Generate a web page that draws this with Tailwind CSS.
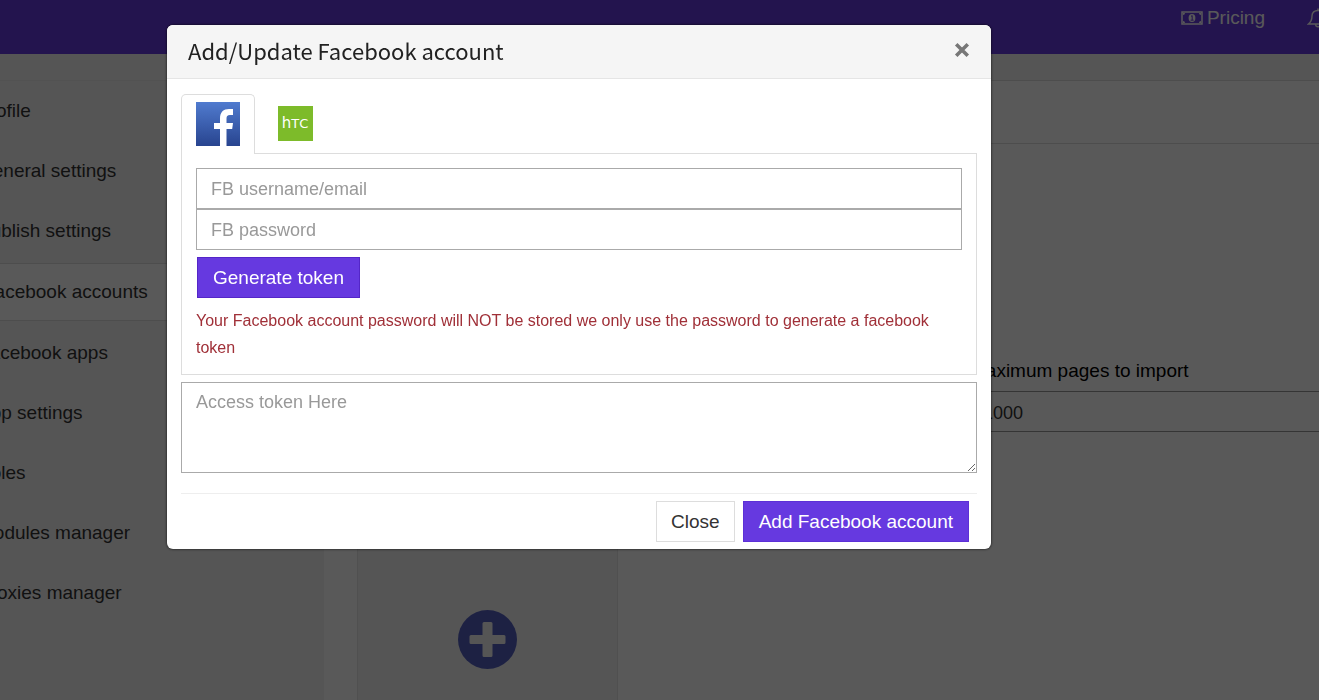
<!DOCTYPE html>
<html lang="en">
<head>
  <meta charset="UTF-8">
  <meta name="viewport" content="width=device-width, initial-scale=1.0">
  <title>Facebook accounts</title>
  <script src="https://cdn.jsdelivr.net/npm/@tailwindcss/browser@4"></script>
</head>
<body class="min-h-screen overflow-hidden bg-[#f3f3f3] font-['Liberation_Sans',sans-serif] text-[19px] text-[#333]">

  <!-- Top bar -->
  <header class="h-[54px] bg-[#6639e0] text-white">
    <nav class="-mr-[10px] flex h-9 items-center justify-end gap-[42px]">
      <a href="#pricing" class="flex items-center gap-1">
        <svg class="h-[14px] w-[22px]" viewBox="0 0 22 14" fill="none" stroke="currentColor" aria-hidden="true">
          <path d="M1 1h20v12H1z" stroke-width="1.500"/>
          <path d="M2 2h2a2 2 0 0 1-2 2zM20 2v2a2 2 0 0 1-2-2zM2 12v-2a2 2 0 0 1 2 2zM20 12h-2a2 2 0 0 1 2-2z" fill="currentColor" stroke="none"/>
          <ellipse cx="11" cy="7" rx="3.4" ry="4" fill="currentColor" stroke="none"/>
          <path d="M10 5.4l1.2-.8v4.4M9.6 9.2h3" class="stroke-[#6639e0]"/>
        </svg>
        Pricing
      </a>
      <a href="#notifications" aria-label="Notifications">
        <svg class="h-[22px] w-[22px]" viewBox="0 0 22 22" fill="none" stroke="currentColor" stroke-width="1.4" aria-hidden="true">
          <path d="M11 1.500v2M1.500 17c2.600-2.200 3.500-4.600 3.500-8 0-3.600 2.400-5.500 6-5.500s6 1.900 6 5.500c0 3.400.9 5.800 3.500 8zM8.700 17.500a2.300 2.300 0 0 0 4.600 0"/>
        </svg>
      </a>
    </nav>
  </header>

  <div class="flex pt-[26px]">
    <!-- Settings menu -->
    <aside class="-ml-10 w-[364px] shrink-0 border-t border-[#eaeaea]">
      <ul class="flex flex-col gap-1 pt-[2px]">
        <li><a href="#profile" class="flex h-14 items-center pl-[17px]">Profile</a></li>
        <li><a href="#general" class="flex h-14 items-center pl-[18px]">General settings</a></li>
        <li><a href="#publish" class="flex h-14 items-center pl-[18px]">Publish settings</a></li>
        <li><a href="#accounts" class="flex h-[58px] items-center border-y border-[#ddd] bg-white pl-[23px]">Facebook accounts</a></li>
        <li><a href="#apps" class="flex h-14 items-center pl-[18px]">Facebook apps</a></li>
        <li><a href="#app-settings" class="flex h-14 items-center pl-[18px]">App settings</a></li>
        <li><a href="#roles" class="flex h-14 items-center pl-[17px]">Roles</a></li>
        <li><a href="#modules" class="flex h-14 items-center pl-[18px]">Modules manager</a></li>
        <li><a href="#proxies" class="flex h-14 items-center pl-[18px]">Proxies manager</a></li>
      </ul>
    </aside>

    <!-- Accounts -->
    <main class="flex-1 border-t border-[#ddd] bg-white">
      <div class="h-[63px] border-b border-[#ddd]"></div>
      <div class="pt-[213px] pl-[646px]">
        <label for="max-pages" class="block h-[34px] leading-7 whitespace-nowrap text-black">Maximum pages to import</label>
        <input id="max-pages" type="text" value="1000" class="h-[41px] w-full border-y border-l border-[#999] px-3 pt-1 text-[18px]">
      </div>
      <div class="mt-8 ml-[33px] flex h-[350px] w-[261px] items-center justify-center border border-[#e5e5e5] bg-[#f3f3f3]">
        <button type="button" aria-label="Add account">
          <svg class="h-[59px] w-[59px]" viewBox="0 0 59 59" aria-hidden="true">
            <circle cx="29.500" cy="29.500" r="29.500" fill="#5560c0"/>
            <path d="M26 12h7a1.500 1.500 0 0 1 1.500 1.500V25H46a1.500 1.500 0 0 1 1.500 1.500v6A1.500 1.500 0 0 1 46 34H34.500v11.500A1.500 1.500 0 0 1 33 47h-7a1.500 1.500 0 0 1-1.500-1.500V34H13a1.500 1.500 0 0 1-1.500-1.500v-6A1.500 1.500 0 0 1 13 25h11.500V13.500A1.500 1.500 0 0 1 26 12z" fill="#f3f3f3"/>
          </svg>
        </button>
      </div>
    </main>
  </div>

  <!-- Add account dialog -->
  <div class="fixed inset-0 bg-black/65 pt-[25px] pl-[167px]">
    <div role="dialog" aria-labelledby="dialog-title" class="w-[824px] max-w-full overflow-hidden rounded-md bg-white shadow-[0_0_3px_rgba(0,0,0,0.8)]">
      <div class="flex h-[54px] items-center justify-between border-b border-[#e5e5e5] bg-[#f5f5f5] px-[21px] pb-1">
        <h4 id="dialog-title" class="font-['Noto_Sans_CJK_SC',sans-serif] text-[22px] leading-8 font-normal text-[#222]">Add/Update Facebook account</h4>
        <button type="button" aria-label="Close dialog" class="text-[#777]">
          <svg class="h-4 w-4" viewBox="0 0 18 18" stroke="currentColor" stroke-width="4" aria-hidden="true"><path d="M2.500 2.500l13 13M15.500 2.500l-13 13"/></svg>
        </button>
      </div>

      <div class="px-[14px] pt-[15px]">
        <div role="tablist" class="flex h-[59px]">
          <button type="button" role="tab" aria-selected="true" aria-label="Facebook" class="relative z-10 -mb-px flex w-[74px] items-start justify-center rounded-t-[5px] border border-b-0 border-[#ddd] bg-white pt-[7px]">
            <svg class="h-11 w-11" viewBox="0 0 44 44" aria-hidden="true">
              <defs><linearGradient id="fb" x1="0" y1="0" x2="0" y2="1"><stop offset="0" stop-color="#507bcf"/><stop offset="1" stop-color="#28448f"/></linearGradient></defs>
              <path d="M0 0h44v44H0z" fill="url(#fb)"/>
              <path d="M24 44V27h-6v-6h6v-4.500C24 10 27.500 7 33 7h4v6h-3c-2.700 0-3.500 1.200-3.500 3.700V21H37l-.8 6h-5.700v17z" fill="#fff"/>
            </svg>
          </button>
          <button type="button" role="tab" aria-selected="false" aria-label="HTC" class="flex w-20 items-center justify-center">
            <span class="flex h-[35px] w-[35px] items-baseline justify-center bg-[#7dbb2a] font-['DejaVu_Sans',sans-serif] text-[13px] leading-[34px] text-white"><span class="text-[15px]">h</span><span>T</span><span>C</span></span>
          </button>
        </div>

        <div role="tabpanel" class="border border-[#ddd] px-[14px] pt-[14px] pb-[13px]">
          <input type="text" aria-label="FB username/email" placeholder="FB username/email" class="block h-[41px] w-full border border-[#aaa] px-[14px] pt-[2px] text-[18px] placeholder:text-[#999]">
          <input type="password" aria-label="FB password" placeholder="FB password" class="block h-[41px] w-full border border-[#aaa] px-[14px] pt-[2px] text-[18px] placeholder:text-[#999]">
          <button type="button" class="mt-[7px] ml-px h-[41px] border border-[#5426c8] bg-[#6639e0] px-[15px] pt-[2px] text-white">Generate token</button>
          <p class="mt-[9px] text-[16px] leading-[27px] text-[#a03038]">Your Facebook account password will NOT be stored we only use the password to generate a facebook token</p>
        </div>

        <textarea aria-label="Access token" placeholder="Access token Here" class="mt-[7px] block h-[91px] w-full resize-y border border-[#aaa] px-[14px] py-[6px] text-[18px] leading-[27px] placeholder:text-[#999]"></textarea>

        <div class="mt-5 flex justify-end gap-2 border-t border-[#eee] px-2 py-[7px]">
          <button type="button" class="h-[41px] border border-[#ddd] bg-white px-[14px] pt-[2px] text-[#333]">Close</button>
          <button type="submit" class="h-[41px] border border-[#5d30d6] bg-[#6639e0] px-[15px] pt-[2px] text-white">Add Facebook account</button>
        </div>
      </div>
    </div>
  </div>

</body>
</html>
